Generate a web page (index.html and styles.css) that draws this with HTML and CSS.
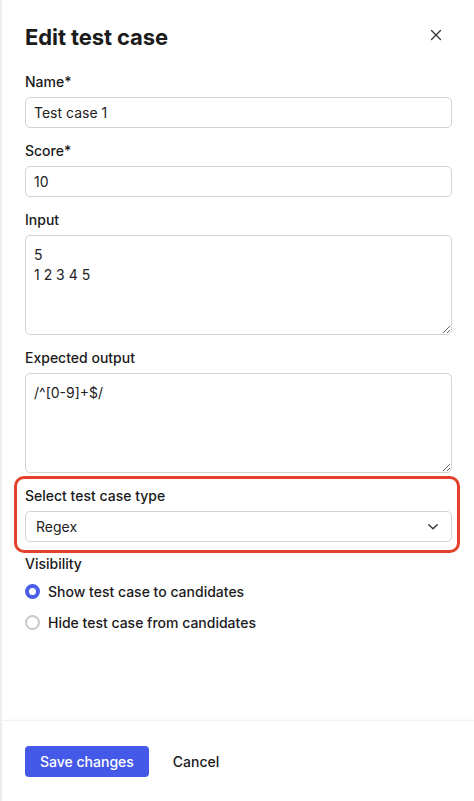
FILE: index.html
```html
<!DOCTYPE html>
<html lang="en">
<head>
<meta charset="utf-8">
<title>Edit test case</title>
<link rel="stylesheet" href="styles.css">
</head>
<body>
<div class="panel">
  <header class="head">
    <h1 class="title">Edit test case</h1>
    <button class="close" aria-label="Close">
      <svg width="12" height="12" viewBox="0 0 12 12"><path d="M1.5 1.5 L10.5 10.5 M10.5 1.5 L1.5 10.5" stroke="#333" stroke-width="1.3" stroke-linecap="round" fill="none"/></svg>
    </button>
  </header>
  <main class="body">
    <div class="field">
      <label class="label">Name*</label>
      <input class="control" type="text" value="Test case 1">
    </div>
    <div class="field">
      <label class="label">Score*</label>
      <input class="control" type="text" value="10">
    </div>
    <div class="field">
      <label class="label">Input</label>
      <textarea class="control area">5
1 2 3 4 5</textarea>
    </div>
    <div class="field">
      <label class="label">Expected output</label>
      <textarea class="control area">/^[0-9]+$/</textarea>
    </div>
    <div class="field highlighted">
      <label class="label">Select test case type</label>
      <div class="select">
        <span class="select-value">Regex</span>
        <svg class="chevron" width="12" height="8" viewBox="0 0 12 8"><path d="M1.8 1.8 L6 5.8 L10.2 1.8" stroke="#333" stroke-width="1.4" stroke-linecap="round" stroke-linejoin="round" fill="none"/></svg>
      </div>
      <div class="highlight-ring"></div>
    </div>
    <div class="field visibility">
      <span class="label">Visibility</span>
      <div class="radios">
        <div class="radio-row"><span class="radio checked"></span><span class="radio-text">Show test case to candidates</span></div>
        <div class="radio-row"><span class="radio"></span><span class="radio-text">Hide test case from candidates</span></div>
      </div>
    </div>
  </main>
  <footer class="foot">
    <button class="btn-primary">Save changes</button>
    <button class="btn-link">Cancel</button>
  </footer>
</div>
</body>
</html>
```

FILE: styles.css
```css
* { box-sizing: border-box; }
html, body { margin: 0; padding: 0; background: #fff; }
body {
  font-family: Inter, "Liberation Sans", Arial, sans-serif;
  color: #1b1b1b;
  width: 474px;
  height: 801px;
  overflow: hidden;
}
.panel {
  height: 801px;
  display: flex;
  flex-direction: column;
  border-left: 2px solid #eeeeee;
}
.head {
  display: flex;
  align-items: center;
  justify-content: space-between;
  padding: 23px 32px 0 23px;
}
.title {
  margin: 0;
  font-size: 22px;
  line-height: 28px;
  font-weight: 700;
  letter-spacing: -0.1px;
}
.close {
  border: 0;
  background: none;
  padding: 0;
  width: 12px;
  height: 12px;
  display: flex;
  margin-top: -4px;
}
.body {
  flex: 1;
  display: flex;
  flex-direction: column;
  gap: 13px;
  padding: 21px 22px 0 23px;
}
.field {
  display: flex;
  flex-direction: column;
  gap: 5px;
}
.label {
  font-size: 14px;
  line-height: 20px;
  font-weight: 500;
  color: #1a1a1a;
}
.control {
  font-family: inherit;
  font-size: 14px;
  color: #222;
  border: 1px solid #d3d3d3;
  border-radius: 5px;
  height: 31px;
  padding: 0 8px;
  outline: none;
  background: #fff;
  width: 100%;
}
.area {
  height: 100px;
  padding: 9px 8px;
  line-height: 20px;
  resize: vertical;
}
.highlighted { position: relative; }
.highlight-ring {
  position: absolute;
  left: -11px;
  right: -8px;
  top: -10px;
  bottom: -11px;
  border: 3px solid #e4412b;
  border-radius: 10px;
  pointer-events: none;
}
.select {
  height: 31px;
  border: 1px solid #d3d3d3;
  border-radius: 5px;
  display: flex;
  align-items: center;
  justify-content: space-between;
  padding: 0 12px 0 10px;
  font-size: 14px;
  color: #222;
}
.chevron { display: block; }
.visibility { gap: 5px; margin-top: -1px; }
.radios { display: flex; flex-direction: column; gap: 7px; }
.radio-row {
  display: flex;
  align-items: center;
  gap: 8px;
  height: 24px;
}
.radio {
  width: 15px;
  height: 15px;
  border-radius: 50%;
  border: 2px solid #c8c8c8;
  background: #fff;
  flex: none;
}
.radio.checked {
  border: 4.5px solid #4a5de6;
}
.radio-text {
  font-size: 14px;
  font-weight: 500;
  color: #1b1b1b;
}
.foot {
  border-top: 1px solid #f2f2f2;
  box-shadow: 0 -3px 6px rgba(0,0,0,0.015);
  padding: 25px 23px 24px;
  display: flex;
  align-items: center;
  gap: 24px;
}
.btn-primary {
  font-family: inherit;
  height: 31px;
  padding: 0 15px;
  border: 0;
  border-radius: 4px;
  background: #4559e8;
  color: #fff;
  font-size: 14px;
  font-weight: 500;
}
.btn-link {
  font-family: inherit;
  border: 0;
  background: none;
  padding: 0;
  font-size: 14px;
  font-weight: 500;
  color: #1b1b1b;
}
```
